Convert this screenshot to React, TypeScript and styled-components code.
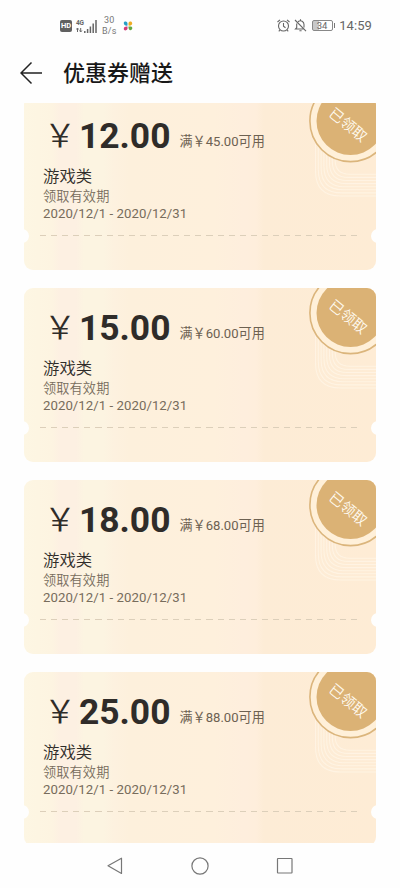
import React from "react";
import styled, { createGlobalStyle } from "styled-components";

const GlobalStyle = createGlobalStyle`
  * { box-sizing: border-box; }
  body { margin: 0; background: #fefefe; }
`;

const Screen = styled.div`
  display: flex;
  flex-direction: column;
  width: 400px;
  height: 888px;
  overflow: hidden;
  background: #fefefe;
  color: #2f2c29;
  font-family: Roboto, "Noto Sans CJK SC", sans-serif;
`;

const StatusBar = styled.div`
  display: flex;
  align-items: center;
  justify-content: space-between;
  height: 50px;
  padding: 1px 28px 0 60px;
  color: #666;
`;

const StatusGroup = styled.div<{ $gap: number }>`
  display: flex;
  align-items: center;
  gap: ${(p) => p.$gap}px;
`;

const NetSpeed = styled.div`
  margin-left: 1px;
  font-size: 9px;
  line-height: 10.5px;
  text-align: center;
  letter-spacing: 0.2px;
  color: #777;
`;

const Clock = styled.span`
  font-size: 13px;
  line-height: 16px;
  letter-spacing: 0.1px;
`;

const Header = styled.header`
  display: flex;
  align-items: center;
  gap: 20px;
  height: 53px;
  padding: 0 0 7px 20px;
`;

const Title = styled.h1`
  margin: 0;
  padding-top: 1px;
  font-size: 22px;
  line-height: 32px;
  font-weight: 500;
  color: #181818;
`;

const CouponViewport = styled.main`
  height: 740px;
  padding: 0 24px;
  overflow: hidden;
`;

const CouponList = styled.div`
  display: flex;
  flex-direction: column;
  gap: 18px;
  margin-top: -7px;
`;

const Coupon = styled.article`
  position: relative;
  flex: none;
  height: 174px;
  padding: 19px 19px 0;
  overflow: hidden;
  border-radius: 9px;
  background: linear-gradient(
    90deg,
    #fdf6e3 0,
    #fdf4e1 28px,
    #fdf0e2 36px,
    #fdf0e2 52px,
    #fcf4e1 60px,
    #fcf4e1 80px,
    #fdf1df 90px,
    #fdf0dc 106px,
    #fef0dc 190px,
    #feeedd 220px,
    #feeedc 232px,
    #fdecd6 240px,
    #feecd5 100%
  );
`;

const PriceRow = styled.div`
  display: flex;
  align-items: baseline;
  height: 50px;
  line-height: 38px;
  white-space: nowrap;
`;

const Yen = styled.span`
  position: relative;
  top: -1px;
  width: 36px;
  padding-left: 1px;
  font-family: "Noto Sans CJK SC", sans-serif;
  font-size: 32px;
  font-weight: 350;
`;

const Amount = styled.span`
  width: 100.5px;
  font-size: 35.4px;
  font-weight: 700;
`;

const Condition = styled.span`
  position: relative;
  top: -2.5px;
  font-size: 13.1px;
  color: #6d6152;
`;

const Category = styled.div`
  height: 22px;
  padding-top: 0.5px;
  font-size: 16.4px;
  font-weight: 350;
  line-height: 22px;
`;

const Validity = styled.div`
  height: 18px;
  padding-top: 0.5px;
  font-size: 13.2px;
  font-weight: 350;
  line-height: 18px;
  letter-spacing: 0.1px;
  color: #776c5c;
`;

const Dates = styled(Validity)`
  padding-top: 0;
  font-weight: 400;
  letter-spacing: 0.05px;
`;

const TearLine = styled.div`
  width: 317px;
  height: 1px;
  margin: 12px 0 0 -3px;
  background: repeating-linear-gradient(90deg, #dccfba 0 6px, transparent 6px 11.1px);
`;

const Notch = styled.i<{ $side: "left" | "right" }>`
  position: absolute;
  top: 133px;
  ${(p) => p.$side}: -9px;
  width: 14px;
  height: 14px;
  border-radius: 50%;
  background: #fefefe;
`;

const Ornament = styled.svg`
  position: absolute;
  top: 0;
  right: 0;
`;

const StampText = styled.span`
  position: absolute;
  top: 19px;
  left: 300px;
  width: 48px;
  line-height: 20px;
  font-size: 14.6px;
  font-weight: 350;
  text-align: center;
  white-space: nowrap;
  color: #fffaf0;
  transform: rotate(39deg);
`;

const NavBar = styled.nav`
  display: flex;
  align-items: center;
  justify-content: center;
  gap: 67px;
  height: 45px;
`;

const coupons = [
  { amount: "12.00", minimum: "45.00" },
  { amount: "15.00", minimum: "60.00" },
  { amount: "18.00", minimum: "68.00" },
  { amount: "25.00", minimum: "88.00" },
];

const ripples = [0, 1, 2, 3, 4, 5, 6, 7];

function StampArt() {
  return (
    <Ornament width="72" height="106" viewBox="0 0 72 106" fill="none">
      {ripples.map((i) => {
        const x = 11.5 + i * 2.8;
        const b = 100 - i * 3.1;
        const r = 25 - i * 1.5;
        return (
          <path
            key={i}
            d={`M${x} 36V${b - r}Q${x} ${b} ${x + r} ${b}H72`}
            stroke="#fff7e8"
            strokeOpacity="0.7"
            strokeWidth="1.1"
          />
        );
      })}
      <circle cx="46.5" cy="25" r="40.6" fill="#fff0d9" stroke="#dbb57c" strokeWidth="1.6" />
      <circle cx="46.5" cy="25" r="34" fill="#dbb275" />
    </Ornament>
  );
}

function CouponCard({ amount, minimum }: { amount: string; minimum: string }) {
  return (
    <Coupon>
      <StampArt />
      <StampText>已领取</StampText>
      <PriceRow>
        <Yen>￥</Yen>
        <Amount>{amount}</Amount>
        <Condition>满￥{minimum}可用</Condition>
      </PriceRow>
      <Category>游戏类</Category>
      <Validity>领取有效期</Validity>
      <Dates>2020/12/1 - 2020/12/31</Dates>
      <TearLine />
      <Notch $side="left" />
      <Notch $side="right" />
    </Coupon>
  );
}

const HdBadge = styled.span`
  width: 12px;
  height: 12px;
  border-radius: 2px;
  background: #606060;
  color: #fff;
  font-size: 7.5px;
  font-weight: 700;
  line-height: 12.5px;
  text-align: center;
`;

const Signal = styled.div`
  display: flex;
  align-items: flex-end;
  height: 14px;
`;

const NetType = styled.div`
  width: 8px;
  font-size: 6.5px;
  font-weight: 700;
  line-height: 7px;
  letter-spacing: -0.3px;
`;

const Battery = styled.span`
  display: flex;
  align-items: center;
  justify-content: center;
  width: 21px;
  height: 11px;
  margin-left: 1px;
  border: 1px solid #888;
  border-radius: 2px;
  background: linear-gradient(90deg, #c8c8c8 0 6px, transparent 6px);
  font-size: 9.5px;
  line-height: 10px;
`;

const BatteryTip = styled.span`
  width: 1.5px;
  height: 5px;
  margin-left: -3px;
  background: #777;
`;

export default function App() {
  return (
    <Screen>
      <GlobalStyle />
      <StatusBar>
        <StatusGroup $gap={4}>
          <HdBadge>HD</HdBadge>
          <Signal>
            <NetType>
              4G
              <svg width="7" height="6" viewBox="0 0 7 6" fill="none" stroke="#666" display="block">
                <path d="M1.5 5V1.5M.3 2.5L1.5 1l1.2 1.5M4.7 1v3.5M3.5 3.5L4.7 5l1.2-1.5" />
              </svg>
            </NetType>
            <svg width="13" height="13" viewBox="0 0 13 13" stroke="#666" strokeWidth="1.5">
              <path d="M.8 13v-2M3.6 13V9M6.4 13V6.5M9.2 13V3.5M12 13V0" />
            </svg>
          </Signal>
          <NetSpeed>
            30
            <br />
            B/s
          </NetSpeed>
          <svg width="10" height="10" viewBox="0 0 10 10" transform="translate(2 0)">
            <path d="M1 3C0 .5 3-.5 4.5 2v2.5C3 5 1.5 4.5 1 3z" fill="#279fc5" />
            <path d="M5.5 4.5V2C6.5-.2 9 .3 9.2 2.2 9.5 4 7.5 5 5.5 4.5z" fill="#efac23" />
            <path d="M4.5 5.5V8C3.5 10 .7 9.8.8 7.8.8 6 2.5 5.2 4.5 5.5z" fill="#d43b78" />
            <path d="M5.5 5.5H8C10 6 9.5 9 7.5 9.2 6 9.2 5.3 7.5 5.5 5.5z" fill="#62a841" />
          </svg>
        </StatusGroup>
        <StatusGroup $gap={4}>
          <svg width="13" height="13" viewBox="0 0 13 13" fill="none" stroke="#666" strokeWidth="1.1">
            <circle cx="6.5" cy="7" r="5" />
            <path d="M6.5 4v3.2l2 1.5M.5 3L3 .8M12.5 3L10 .8M2.8 11l-1 1.3M10.2 11l1 1.3" />
          </svg>
          <svg width="13" height="13" viewBox="0 0 13 13" fill="none" stroke="#666" strokeWidth="1.1">
            <path d="M4 2.7C7 .5 10 2.7 10 5.5v3M2.7 4.5v4.2L1.5 10h9M5.4 11.8h2.2M6.5.3v1.2M1 1l11 11.2" />
          </svg>
          <Battery>34</Battery>
          <BatteryTip />
          <Clock>14:59</Clock>
        </StatusGroup>
      </StatusBar>
      <Header>
        <svg width="23" height="24" viewBox="0 0 23 24" fill="none" stroke="#222" strokeWidth="1.5">
          <path d="M11.5 1.5L1 12l10.5 10.5M1 12h21" />
        </svg>
        <Title>优惠券赠送</Title>
      </Header>
      <CouponViewport>
        <CouponList>
          {coupons.map((c) => (
            <CouponCard key={c.amount} {...c} />
          ))}
        </CouponList>
      </CouponViewport>
      <NavBar>
        <svg width="18" height="18" viewBox="0 0 18 18" fill="none" stroke="#777" strokeWidth="1.2">
          <path d="M15.5 1.2v15.2L2 8.8z" strokeLinejoin="round" />
        </svg>
        <svg width="18" height="18" viewBox="0 0 18 18" fill="none" stroke="#777" strokeWidth="1.2">
          <circle cx="9" cy="9" r="8.1" />
        </svg>
        <svg width="18" height="18" viewBox="0 0 18 18" fill="none" stroke="#777" strokeWidth="1.2">
          <rect x="1.5" y="1.5" width="14.5" height="14.5" rx="0.5" />
        </svg>
      </NavBar>
    </Screen>
  );
}
